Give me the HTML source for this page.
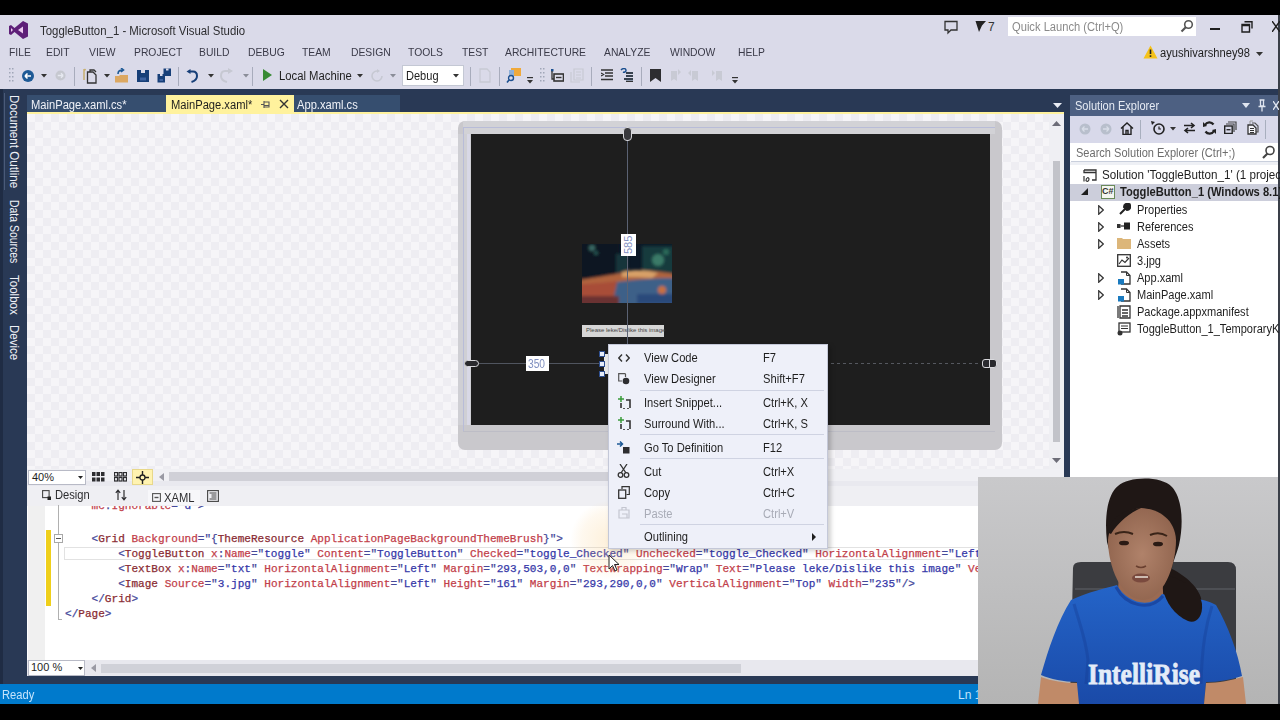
<!DOCTYPE html>
<html><head><meta charset="utf-8">
<style>
*{margin:0;padding:0;box-sizing:border-box}
html,body{width:1280px;height:720px;overflow:hidden;background:#000;font-family:"Liberation Sans",sans-serif;position:relative}
.a{position:absolute}
.t{position:absolute;white-space:nowrap;line-height:1}
.mono{font-family:"Liberation Mono",monospace;-webkit-text-stroke:0.25px currentColor}
</style></head><body>
<!-- frame backgrounds -->
<div class="a" style="left:0;top:15px;width:1278px;height:74px;background:#dadae9"></div>
<div class="a" style="left:0;top:89px;width:1278px;height:595px;background:#293955"></div>
<div class="a" style="left:0;top:684px;width:1278px;height:20px;background:#007acc"></div>
<div class="a" style="left:1278px;top:15px;width:2px;height:689px;background:#3a3f48"></div>

<!-- TITLE -->
<div id="title">
<svg class="a" style="left:8px;top:20px" width="22" height="20" viewBox="0 0 22 20"><path d="M15 6.5 L10 10 L15 13.5 Z M3 8 V12 L5 10 Z" fill="#ecc8f0"/><path d="M15 1 L20 3.5 V16.5 L15 19 L6.5 12 L3 15 L1 14 V6 L3 5 L6.5 8 Z M15 6.5 L10 10 L15 13.5 Z M3 8 V12 L5 10 Z" fill="#5e1f78" fill-rule="evenodd"/></svg>
<div class="t" style="left:40px;top:25px;font-size:12px;color:#2d2d30;transform:scaleX(0.95);transform-origin:0 0">ToggleButton_1 - Microsoft Visual Studio</div>
<!-- right side title -->
<svg class="a" style="left:943px;top:20px" width="16" height="15" viewBox="0 0 16 15"><path d="M2 1.5 H14 V10 H8 L5 13 V10 H2 Z" fill="none" stroke="#333" stroke-width="1.3"/></svg>
<svg class="a" style="left:975px;top:20px" width="12" height="13" viewBox="0 0 12 13"><path d="M0.5 1 H11 L7 5.5 L4 12 Z" fill="#222"/></svg>
<div class="t" style="left:988px;top:21px;font-size:12px;color:#333">7</div>
<div class="a" style="left:1008px;top:17px;width:188px;height:19px;background:#fff"></div>
<div class="t" style="left:1012px;top:21px;font-size:12px;color:#8a8a8a;transform:scaleX(0.93);transform-origin:0 0">Quick Launch (Ctrl+Q)</div>
<svg class="a" style="left:1180px;top:19px" width="14" height="14" viewBox="0 0 14 14"><circle cx="8.5" cy="5.5" r="3.8" fill="none" stroke="#555" stroke-width="1.6"/><path d="M6 8 L1.5 12.5" stroke="#555" stroke-width="2.2"/></svg>
<div class="a" style="left:1210px;top:28px;width:10px;height:2px;background:#1e1e1e"></div>
<svg class="a" style="left:1241px;top:21px" width="12" height="12" viewBox="0 0 12 12"><path d="M3.5 0.8 H11 V7.5 M1 3.5 H8.5 V11 H1 Z M1 4.5 H8.5" fill="none" stroke="#1e1e1e" stroke-width="1.4"/></svg>
<svg class="a" style="left:1272px;top:21px" width="8" height="11" viewBox="0 0 8 11"><path d="M0 0 L8 11 M8 0 L0 11" stroke="#1e1e1e" stroke-width="1.4"/></svg>
</div>
<!-- MENU -->
<div id="menu"><div class="t m" style="left:9px;top:47px;font-size:11px;color:#3a3a48;transform:scaleX(0.94);transform-origin:0 0">FILE</div><div class="t m" style="left:46px;top:47px;font-size:11px;color:#3a3a48;transform:scaleX(0.94);transform-origin:0 0">EDIT</div><div class="t m" style="left:89px;top:47px;font-size:11px;color:#3a3a48;transform:scaleX(0.94);transform-origin:0 0">VIEW</div><div class="t m" style="left:134px;top:47px;font-size:11px;color:#3a3a48;transform:scaleX(0.94);transform-origin:0 0">PROJECT</div><div class="t m" style="left:199px;top:47px;font-size:11px;color:#3a3a48;transform:scaleX(0.94);transform-origin:0 0">BUILD</div><div class="t m" style="left:248px;top:47px;font-size:11px;color:#3a3a48;transform:scaleX(0.94);transform-origin:0 0">DEBUG</div><div class="t m" style="left:302px;top:47px;font-size:11px;color:#3a3a48;transform:scaleX(0.94);transform-origin:0 0">TEAM</div><div class="t m" style="left:351px;top:47px;font-size:11px;color:#3a3a48;transform:scaleX(0.94);transform-origin:0 0">DESIGN</div><div class="t m" style="left:408px;top:47px;font-size:11px;color:#3a3a48;transform:scaleX(0.94);transform-origin:0 0">TOOLS</div><div class="t m" style="left:462px;top:47px;font-size:11px;color:#3a3a48;transform:scaleX(0.94);transform-origin:0 0">TEST</div><div class="t m" style="left:505px;top:47px;font-size:11px;color:#3a3a48;transform:scaleX(0.94);transform-origin:0 0">ARCHITECTURE</div><div class="t m" style="left:604px;top:47px;font-size:11px;color:#3a3a48;transform:scaleX(0.94);transform-origin:0 0">ANALYZE</div><div class="t m" style="left:670px;top:47px;font-size:11px;color:#3a3a48;transform:scaleX(0.94);transform-origin:0 0">WINDOW</div><div class="t m" style="left:738px;top:47px;font-size:11px;color:#3a3a48;transform:scaleX(0.94);transform-origin:0 0">HELP</div><svg class="a" style="left:1143px;top:45px" width="15" height="14" viewBox="0 0 15 14"><path d="M7.5 0.5 L14.5 13.5 H0.5 Z" fill="#f5c21a"/><path d="M7.5 4.5 V9" stroke="#1e1e1e" stroke-width="1.6"/><rect x="6.7" y="10.3" width="1.6" height="1.6" fill="#1e1e1e"/></svg>
<div class="t" style="left:1160px;top:47px;font-size:12px;color:#1e1e1e;transform:scaleX(0.93);transform-origin:0 0">ayushivarshney98</div>
<svg class="a" style="left:1256px;top:52px" width="7" height="4"><path d="M0 0 H7 L3.5 4 Z" fill="#333"/></svg>
</div>
<!-- TOOLBAR -->
<div id="toolbar">
<svg class="a" style="left:8px;top:67px" width="8" height="18"><g fill="#a0a6b8"><rect x="1" y="1" width="1.5" height="1.5"/><rect x="4" y="1" width="1.5" height="1.5"/><rect x="1" y="5" width="1.5" height="1.5"/><rect x="4" y="5" width="1.5" height="1.5"/><rect x="1" y="9" width="1.5" height="1.5"/><rect x="4" y="9" width="1.5" height="1.5"/><rect x="1" y="13" width="1.5" height="1.5"/><rect x="4" y="13" width="1.5" height="1.5"/></g></svg>
<svg class="a" style="left:22px;top:70px" width="12" height="12" viewBox="0 0 12 12"><circle cx="6" cy="6" r="6" fill="#1e5a96"/><path d="M3 6 H9 M3 6 L5.5 3.5 M3 6 L5.5 8.5" stroke="#fff" stroke-width="1.6" fill="none"/></svg>
<svg class="a" style="left:41px;top:74px" width="6" height="4"><path d="M0 0 H6 L3 3.5 Z" fill="#333"/></svg>
<svg class="a" style="left:55px;top:70px" width="11" height="11" viewBox="0 0 12 12"><circle cx="6" cy="6" r="5.5" fill="#c6c8d0"/><path d="M3 6 H9 M9 6 L6.5 3.5 M9 6 L6.5 8.5" stroke="#e6e8f0" stroke-width="1.4" fill="none"/></svg>
<div class="a" style="left:74px;top:67px;width:1px;height:19px;background:#a8acbc"></div>
<svg class="a" style="left:83px;top:68px" width="15" height="16" viewBox="0 0 15 16"><path d="M1 1 V12 M2.5 1 L1 3" stroke="#c8b070" stroke-width="1.5"/><path d="M4.5 4 H10 L13 7 V15 H4.5 Z M7 4 V2 H11 L13 4" fill="none" stroke="#333" stroke-width="1.3"/></svg>
<svg class="a" style="left:104px;top:74px" width="6" height="4"><path d="M0 0 H6 L3 3.5 Z" fill="#333"/></svg>
<svg class="a" style="left:114px;top:68px" width="15" height="15" viewBox="0 0 15 15"><path d="M1 8 H5 L6 7 H14 V14.5 H1 Z" fill="#dca862"/><path d="M4 6 C4 2.5 6 2 9 2 M7 0 L9.5 2 L7 4" stroke="#1e5a96" stroke-width="1.6" fill="none"/></svg>
<svg class="a" style="left:137px;top:70px" width="12" height="12" viewBox="0 0 12 12"><path d="M0 0 H12 V12 H0 Z" fill="#173f78"/><rect x="4" y="0" width="4" height="3" fill="#dadae9"/><rect x="3" y="7.5" width="6" height="3" fill="#3d62a0"/></svg>
<svg class="a" style="left:157px;top:68px" width="15" height="15" viewBox="0 0 15 15"><path d="M6.5 0.5 H14 V8 H6.5 Z" fill="#173f78"/><rect x="9" y="0.5" width="2.5" height="2" fill="#dadae9"/><path d="M0.5 6 H8 V14.5 H0.5 Z" fill="#173f78"/><rect x="3" y="6" width="2.5" height="2" fill="#dadae9"/><rect x="2.5" y="11" width="3.5" height="2" fill="#3d62a0"/></svg>
<div class="a" style="left:178px;top:67px;width:1px;height:19px;background:#a8acbc"></div>
<svg class="a" style="left:186px;top:69px" width="12" height="14" viewBox="0 0 12 14"><path d="M3 2.5 H7 C10 2.5 11 5 11 7 C11 10 9 12 5.5 13" fill="none" stroke="#173f78" stroke-width="2"/><path d="M0.5 2.5 L4.5 0 V5 Z" fill="#173f78"/></svg>
<svg class="a" style="left:208px;top:74px" width="6" height="4"><path d="M0 0 H6 L3 3.5 Z" fill="#333"/></svg>
<svg class="a" style="left:220px;top:68px" width="13" height="15" viewBox="0 0 13 15"><path d="M9 3 H5 C2 3 1 5.5 1 8 C1 11 3 13 7 14" fill="none" stroke="#c6c8d2" stroke-width="2"/><path d="M13 3 L8 0 V6 Z" fill="#c6c8d2"/></svg>
<svg class="a" style="left:243px;top:74px" width="6" height="4"><path d="M0 0 H6 L3 3.5 Z" fill="#8a8d98"/></svg>
<div class="a" style="left:252px;top:67px;width:1px;height:19px;background:#a8acbc"></div>
<svg class="a" style="left:263px;top:69px" width="9" height="12"><path d="M0 0 L9 6 L0 12 Z" fill="#388a34"/></svg>
<div class="t" style="left:279px;top:70px;font-size:12px;color:#1e1e1e;transform:scaleX(0.94);transform-origin:0 0">Local Machine</div>
<svg class="a" style="left:357px;top:74px" width="6" height="4"><path d="M0 0 H6 L3 3.5 Z" fill="#333"/></svg>
<svg class="a" style="left:371px;top:69px" width="12" height="13" viewBox="0 0 12 13"><path d="M6 2 A5 5 0 1 0 11 7" fill="none" stroke="#c6c8d2" stroke-width="1.6"/><path d="M6 0 V4 L9 2 Z" fill="#c6c8d2"/></svg>
<svg class="a" style="left:390px;top:74px" width="6" height="4"><path d="M0 0 H6 L3 3.5 Z" fill="#8a8d98"/></svg>
<div class="a" style="left:402px;top:65px;width:62px;height:21px;background:#fff;border:1px solid #c4c8d4"></div>
<div class="t" style="left:406px;top:70px;font-size:12px;color:#1e1e1e;transform:scaleX(0.92);transform-origin:0 0">Debug</div>
<svg class="a" style="left:453px;top:74px" width="6" height="4"><path d="M0 0 H6 L3 3.5 Z" fill="#333"/></svg>
<div class="a" style="left:470px;top:67px;width:1px;height:19px;background:#a8acbc"></div>
<svg class="a" style="left:479px;top:68px" width="12" height="15"><path d="M1 1 H8 L11 4 V14 H1 Z" fill="none" stroke="#c8cad4" stroke-width="1.3"/></svg>
<div class="a" style="left:499px;top:67px;width:1px;height:19px;background:#a8acbc"></div>
<svg class="a" style="left:506px;top:67px" width="16" height="16" viewBox="0 0 16 16"><rect x="5" y="1" width="10" height="8" fill="#f0a93a"/><rect x="3" y="3" width="5" height="6" fill="#8fb0d8"/><circle cx="5" cy="11" r="2.5" fill="none" stroke="#1b4f8f" stroke-width="1.4"/><path d="M3 13 L1 15.5" stroke="#1b4f8f" stroke-width="1.6"/></svg>
<svg class="a" style="left:527px;top:77px" width="6" height="7"><rect x="0" y="0" width="6" height="1.2" fill="#333"/><path d="M0 3 H6 L3 6.5 Z" fill="#333"/></svg>
<svg class="a" style="left:539px;top:67px" width="8" height="18"><g fill="#a0a6b8"><rect x="1" y="1" width="1.5" height="1.5"/><rect x="4" y="1" width="1.5" height="1.5"/><rect x="1" y="5" width="1.5" height="1.5"/><rect x="4" y="5" width="1.5" height="1.5"/><rect x="1" y="9" width="1.5" height="1.5"/><rect x="4" y="9" width="1.5" height="1.5"/><rect x="1" y="13" width="1.5" height="1.5"/><rect x="4" y="13" width="1.5" height="1.5"/></g></svg>
<svg class="a" style="left:550px;top:69px" width="14" height="13" viewBox="0 0 14 13"><rect x="1" y="0" width="2.5" height="2.5" fill="#1b4f8f"/><path d="M2 2 V10 H4" stroke="#333" stroke-width="1.3" fill="none"/><rect x="4" y="5" width="9.5" height="7" fill="none" stroke="#333" stroke-width="1.6"/><path d="M6 8.5 H11.5" stroke="#333" stroke-width="1.4"/></svg>
<svg class="a" style="left:570px;top:68px" width="14" height="15" viewBox="0 0 14 15"><path d="M1 4 V14 H10 M4 1 H13 V12 H4 Z M6 4 H11 M6 7 H11 M6 10 H11" fill="none" stroke="#c8cad4" stroke-width="1.2"/></svg>
<div class="a" style="left:591px;top:67px;width:1px;height:19px;background:#a8acbc"></div>
<svg class="a" style="left:601px;top:69px" width="12" height="12" viewBox="0 0 12 12"><path d="M0 1 H12 M4 4 H12 M4 7 H12 M0 10.5 H12 M0 4 L2.5 5.5 L0 7" stroke="#333" stroke-width="1.3" fill="none"/></svg>
<svg class="a" style="left:620px;top:68px" width="13" height="14" viewBox="0 0 13 14"><path d="M1 2 C3 0 6 0 6 2.5 C6 4 4 4.5 3 4 M6 5 H13 M6 8 H13 M4 11 H13 M6 13.5 H13" stroke="#1b4f8f" stroke-width="1.5" fill="none"/><path d="M6 5 H13 M6 8 H13 M4 11 H13 M6 13.5 H13" stroke="#333" stroke-width="1.3"/></svg>
<div class="a" style="left:641px;top:67px;width:1px;height:19px;background:#a8acbc"></div>
<svg class="a" style="left:650px;top:69px" width="11" height="13"><path d="M0 0 H11 V13 L5.5 9 L0 13 Z" fill="#2d2d30"/></svg>
<svg class="a" style="left:671px;top:69px" width="10" height="13"><path d="M0 2 H6 V12 L3 10 L0 12 Z M7 0 L10 3 L7 6" fill="#c8cad4"/></svg>
<svg class="a" style="left:688px;top:69px" width="11" height="13"><path d="M4 2 H10 V12 L7 10 L4 12 Z M3 1 L0 4 L3 7" fill="#c8cad4"/></svg>
<svg class="a" style="left:712px;top:69px" width="11" height="13"><path d="M4 2 H10 V12 L7 10 L4 12 Z M0 1 L3 4 L0 7" fill="#c8cad4"/></svg>
<svg class="a" style="left:732px;top:77px" width="6" height="7"><rect x="0" y="0" width="6" height="1.2" fill="#333"/><path d="M0 3 H6 L3 6.5 Z" fill="#333"/></svg>
</div>
<!-- TABS -->
<div id="tabs">
<div class="a" style="left:27px;top:95px;width:139px;height:18px;background:#364e6f"></div>
<div class="t" style="left:31px;top:99px;font-size:12px;color:#f0f2f8;transform:scaleX(0.93);transform-origin:0 0">MainPage.xaml.cs*</div>
<div class="a" style="left:166px;top:95px;width:128px;height:18px;background:#fff29d"></div>
<div class="t" style="left:171px;top:99px;font-size:12px;color:#1e1e1e;transform:scaleX(0.93);transform-origin:0 0">MainPage.xaml*</div>
<svg class="a" style="left:261px;top:100px" width="10" height="9" viewBox="0 0 10 9"><path d="M0 4.5 H3 M3 1 V8 M3 2 H8 V7 H3 M3 5.5 H8" stroke="#555" stroke-width="1.1" fill="none"/></svg>
<svg class="a" style="left:279px;top:99px" width="10" height="10" viewBox="0 0 10 10"><path d="M1 1 L9 9 M9 1 L1 9" stroke="#333" stroke-width="1.4"/></svg>
<div class="a" style="left:294px;top:95px;width:106px;height:18px;background:#364e6f"></div>
<div class="t" style="left:297px;top:99px;font-size:12px;color:#f0f2f8;transform:scaleX(0.93);transform-origin:0 0">App.xaml.cs</div>
<svg class="a" style="left:1053px;top:103px" width="9" height="5"><path d="M0 0 H9 L4.5 5 Z" fill="#e8ecf4"/></svg>
<div class="a" style="left:27px;top:112px;width:1037px;height:2px;background:#fff29d"></div>
</div>
<!-- LEFT STRIP -->
<div id="left">
<div class="a" style="left:0;top:89px;width:3px;height:595px;background:#1f2c44"></div>
<div class="a" style="left:4px;top:93px;width:1px;height:97px;background:#4a5a78"></div>
<div class="t" style="left:20px;top:95px;font-size:12px;color:#eef0f6;transform:rotate(90deg) scaleX(0.97);transform-origin:0 0">Document Outline</div>
<div class="t" style="left:20px;top:200px;font-size:12px;color:#eef0f6;transform:rotate(90deg) scaleX(0.87);transform-origin:0 0">Data Sources</div>
<div class="t" style="left:20px;top:275px;font-size:12px;color:#eef0f6;transform:rotate(90deg) scaleX(0.96);transform-origin:0 0">Toolbox</div>
<div class="t" style="left:20px;top:325px;font-size:12px;color:#eef0f6;transform:rotate(90deg) scaleX(0.96);transform-origin:0 0">Device</div>
</div>
<!-- DESIGNER -->
<div id="designer">
<div class="a" style="left:27px;top:114px;width:1037px;height:355px;background-color:#f6f5f8;background-image:linear-gradient(45deg,#eeedf2 25%,transparent 25%,transparent 75%,#eeedf2 75%),linear-gradient(45deg,#eeedf2 25%,transparent 25%,transparent 75%,#eeedf2 75%);background-size:16px 16px;background-position:0 0,8px 8px"></div>
<!-- v scrollbar -->
<div class="a" style="left:1049px;top:114px;width:15px;height:355px;background:#efeff3"></div>
<div class="a" style="left:1053px;top:161px;width:7px;height:281px;background:#c2c3c9"></div>
<svg class="a" style="left:1052px;top:121px" width="9" height="5"><path d="M0 5 H9 L4.5 0 Z" fill="#6d6d78"/></svg>
<svg class="a" style="left:1052px;top:458px" width="9" height="5"><path d="M0 0 H9 L4.5 5 Z" fill="#6d6d78"/></svg>
<!-- device frame -->
<div class="a" style="left:458px;top:121px;width:544px;height:329px;background:#c9c8cc;border-radius:7px"></div>
<div class="a" style="left:463px;top:121px;width:532px;height:13px;background:#d2d2d6"></div>
<div class="a" style="left:463px;top:127px;width:532px;height:1px;background:#b8bcd8"></div>
<div class="a" style="left:458px;top:134px;width:13px;height:291px;background:#cfcfd4"></div>
<div class="a" style="left:463px;top:127px;width:1px;height:304px;background:#b8bcd8"></div>
<div class="a" style="left:467px;top:134px;width:3px;height:291px;background:#d8d8e6"></div>
<div class="a" style="left:463px;top:431px;width:532px;height:1px;background:#bdbdc6"></div>
<div class="a" style="left:471px;top:134px;width:519px;height:291px;background:#1e1e1e"></div>
<!-- image -->
<svg class="a" style="left:582px;top:244px" width="90" height="59" viewBox="0 0 90 59">
<defs><filter id="bl" x="-10%" y="-10%" width="120%" height="120%"><feGaussianBlur stdDeviation="1.6"/></filter><clipPath id="cp"><rect width="90" height="59"/></clipPath></defs>
<rect width="90" height="59" fill="#0c1826"/>
<g clip-path="url(#cp)" filter="url(#bl)">
<rect x="-3" y="-3" width="40" height="38" fill="#0a1424"/>
<rect x="34" y="10" width="12" height="24" fill="#15343a"/>
<rect x="60" y="2" width="32" height="32" fill="#143a3c"/>
<circle cx="76" cy="16" r="6" fill="#3a7a68"/>
<circle cx="84" cy="8" r="3" fill="#2a6a5a"/>
<circle cx="10" cy="4" r="3" fill="#3a6a66"/>
<circle cx="14" cy="9" r="2" fill="#2a5a56"/>
<path d="M-3 36 C15 33 35 30 50 27 C65 26 80 28 93 30 V44 H-3 Z" fill="#b0643e"/>
<path d="M40 28 C52 25 66 26 76 29 L70 34 C60 33 48 33 40 33 Z" fill="#d8a068"/>
<path d="M-3 40 C10 40 25 38 35 37 L38 62 H-3 Z" fill="#a84e38"/>
<path d="M35 38 C50 36 70 34 93 34 V62 H30 Z" fill="#3e6088"/>
<circle cx="80" cy="46" r="4" fill="#c87040"/>
<rect x="-3" y="52" width="40" height="10" fill="#6a3030"/>
<rect x="55" y="50" width="38" height="10" fill="#2a4a7a"/>
</g>
</svg>
<!-- textbox -->
<div class="a" style="left:582px;top:325px;width:82px;height:12px;background:#d6d6d6"></div>
<div class="t" style="left:586px;top:327px;font-size:6px;color:#444">Please leke/Dislike this image</div>
<!-- top margin adorner -->
<div class="a" style="left:627px;top:134px;width:1.4px;height:228px;background:#5b6273"></div>
<div class="a" style="left:623px;top:127px;width:9px;height:14px;background:#3a3a3e;border:1.5px solid #d8d8dc;border-radius:4px"></div>
<div class="a" style="left:621px;top:234px;width:15px;height:22px;background:#fff"></div>
<div class="t" style="left:623px;top:254px;font-size:11px;color:#7f8fc2;transform:rotate(-90deg);transform-origin:0 0">585</div>
<!-- left margin adorner -->
<div class="a" style="left:471px;top:363px;width:130px;height:1.4px;background:#50555f"></div>
<div class="a" style="left:464px;top:360px;width:15px;height:7px;background:#2a2a2e;border:1.5px solid #d8d8dc;border-radius:4px"></div>
<div class="a" style="left:526px;top:356px;width:23px;height:15px;background:#fff"></div>
<div class="t" style="left:528px;top:358px;font-size:12px;color:#8090c0;transform:scaleX(0.85);transform-origin:0 0">350</div>
<!-- selection handles -->
<div class="a" style="left:604px;top:354px;width:4px;height:20px;background:#e8e8e8"></div>
<div class="a" style="left:600px;top:352px;width:4px;height:4px;background:#e6ecf8;outline:1px solid #2f4f8f"></div>
<div class="a" style="left:600px;top:362px;width:4px;height:4px;background:#e6ecf8;outline:1px solid #2f4f8f"></div>
<div class="a" style="left:600px;top:372px;width:4px;height:4px;background:#e6ecf8;outline:1px solid #2f4f8f"></div>
<!-- right dotted adorner -->
<div class="a" style="left:831px;top:363px;width:150px;height:1.4px;background-image:linear-gradient(90deg,#55585f 50%,transparent 50%);background-size:6px 2px"></div>
<div class="a" style="left:982px;top:359px;width:8px;height:9px;background:#2a2a2e;border:1.5px solid #d8d8dc;border-radius:3px 0 0 3px"></div>
<div class="a" style="left:989px;top:359px;width:8px;height:9px;background:#2a2a2e;border:1.5px solid #d8d8dc;border-radius:0 3px 3px 0"></div>
</div>
<!-- CODE -->
<div id="code">
<!-- zoom bar -->
<div class="a" style="left:27px;top:469px;width:1037px;height:12px;background:#f0f0f4"></div><div class="a" style="left:27px;top:481px;width:1037px;height:5px;background:#e9e9ef"></div>
<div class="a" style="left:28px;top:470px;width:58px;height:15px;background:#fff;border:1px solid #b8bac6"></div>
<div class="t" style="left:32px;top:472px;font-size:11px;color:#1e1e1e">40%</div>
<svg class="a" style="left:78px;top:476px" width="5" height="3"><path d="M0 0 H5 L2.5 3 Z" fill="#222"/></svg>
<svg class="a" style="left:92px;top:472px" width="13" height="10"><g fill="#2d2d30"><rect x="0" y="0" width="3.5" height="4"/><rect x="4.5" y="0" width="3.5" height="4"/><rect x="9" y="0" width="3.5" height="4"/><rect x="0" y="5.5" width="3.5" height="4"/><rect x="4.5" y="5.5" width="3.5" height="4"/><rect x="9" y="5.5" width="3.5" height="4"/></g></svg>
<svg class="a" style="left:114px;top:472px" width="13" height="10"><g fill="none" stroke="#2d2d30" stroke-width="1.2"><rect x="0.5" y="0.5" width="3" height="3.5"/><rect x="5" y="0.5" width="3" height="3.5"/><rect x="9.5" y="0.5" width="3" height="3.5"/><rect x="0.5" y="5.5" width="3" height="3.5"/><rect x="5" y="5.5" width="3" height="3.5"/><rect x="9.5" y="5.5" width="3" height="3.5"/></g></svg>
<div class="a" style="left:132px;top:469px;width:21px;height:16px;background:#fff3b0;border:1px solid #e8d88a"></div>
<svg class="a" style="left:136px;top:471px" width="13" height="13" viewBox="0 0 13 13"><circle cx="6.5" cy="6.5" r="2.5" fill="none" stroke="#222" stroke-width="1.3"/><path d="M6.5 0 V4 M6.5 9 V13 M0 6.5 H4 M9 6.5 H13" stroke="#222" stroke-width="1.4"/></svg>
<svg class="a" style="left:159px;top:473px" width="5" height="8"><path d="M5 0 V8 L0 4 Z" fill="#9a9aa4"/></svg>
<div class="a" style="left:169px;top:472px;width:550px;height:9px;background:#d0d0d7"></div>
<!-- design/xaml tab row -->
<div class="a" style="left:27px;top:486px;width:1037px;height:20px;background:#efeff3"></div>
<svg class="a" style="left:42px;top:490px" width="9" height="10" viewBox="0 0 9 10"><rect x="0.6" y="0.6" width="6.5" height="7" fill="none" stroke="#444" stroke-width="1.1"/><rect x="5.5" y="6.5" width="3.5" height="3.5" fill="#222"/></svg>
<div class="t" style="left:55px;top:489px;font-size:12px;color:#2d2d30;transform:scaleX(0.93);transform-origin:0 0">Design</div>
<svg class="a" style="left:115px;top:489px" width="12" height="12" viewBox="0 0 12 12"><path d="M3 11 V1.5 M0.8 3.8 L3 1.2 L5.2 3.8 M9 1 V10.5 M6.8 8.2 L9 10.8 L11.2 8.2" fill="none" stroke="#2d2d30" stroke-width="1.2"/></svg>
<div class="a" style="left:148px;top:490px;width:52px;height:15px;background:#f7f7fa"></div>
<svg class="a" style="left:152px;top:493px" width="9" height="9" viewBox="0 0 9 9"><rect x="0.6" y="0.6" width="7.8" height="7.8" fill="none" stroke="#555" stroke-width="1.1"/><rect x="2.5" y="3.8" width="4" height="1.4" fill="#555"/></svg>
<div class="t" style="left:164px;top:492px;font-size:12px;color:#2d2d30;transform:scaleX(0.93);transform-origin:0 0">XAML</div>
<svg class="a" style="left:207px;top:490px" width="12" height="12" viewBox="0 0 12 12"><rect x="0.6" y="0.6" width="10.8" height="10.8" fill="none" stroke="#444" stroke-width="1.1"/><path d="M2.5 3 H9.5 M4.5 5 H9.5 M4.5 7 H9.5 M2.5 9 H9.5" stroke="#444" stroke-width="1"/></svg>
<!-- code editor -->
<div class="a" style="left:27px;top:506px;width:1037px;height:154px;background:#fff"></div>
<div class="a" style="left:28px;top:506px;width:17px;height:154px;background:#f0f0f0"></div>
<div class="a" style="left:64px;top:547px;width:1000px;height:13px;border:1px solid #e2e2e2;border-right:none"></div>
<div class="a" style="left:46px;top:530px;width:5px;height:76px;background:#efcf1a"></div>
<div class="a" style="left:58px;top:505px;width:1px;height:114px;background:#b0b0b0"></div>
<div class="a" style="left:58px;top:619px;width:4px;height:1px;background:#b0b0b0"></div>
<div class="a" style="left:54px;top:534px;width:9px;height:9px;background:#fff;border:1px solid #a8a8a8"></div><div class="a" style="left:56px;top:538px;width:5px;height:1px;background:#555"></div>
<div class="a" style="left:27px;top:506px;width:1037px;height:154px;overflow:hidden"><div class="t mono" style="left:64.58px;top:-6px;font-size:11.075px;line-height:13px"><span style="color:#c2404a">mc</span><span style="color:#44489a">:</span><span style="color:#c2404a">Ignorable</span><span style="color:#44489a">=</span><span style="color:#44489a">"</span><span style="color:#3638a8">d</span><span style="color:#44489a">"</span><span style="color:#44489a">&gt;</span></div><div class="t mono" style="left:64.58px;top:26.5px;font-size:11.075px;line-height:13px"><span style="color:#44489a">&lt;</span><span style="color:#8a2c34">Grid</span><span style="color:#44489a"> </span><span style="color:#c2404a">Background</span><span style="color:#44489a">=</span><span style="color:#44489a">"{</span><span style="color:#8a2c34">ThemeResource</span><span style="color:#44489a"> </span><span style="color:#c2404a">ApplicationPageBackgroundThemeBrush</span><span style="color:#44489a">}"</span><span style="color:#44489a">&gt;</span></div><div class="t mono" style="left:91.16px;top:41.5px;font-size:11.075px;line-height:13px"><span style="color:#44489a">&lt;</span><span style="color:#8a2c34">ToggleButton</span><span style="color:#44489a"> </span><span style="color:#c2404a">x</span><span style="color:#44489a">:</span><span style="color:#c2404a">Name</span><span style="color:#44489a">="</span><span style="color:#3638a8">toggle</span><span style="color:#44489a">"</span><span style="color:#c2404a"> Content</span><span style="color:#44489a">="</span><span style="color:#3638a8">ToggleButton</span><span style="color:#44489a">"</span><span style="color:#c2404a"> Checked</span><span style="color:#44489a">="</span><span style="color:#3638a8">toggle_Checked</span><span style="color:#44489a">"</span><span style="color:#c2404a"> Unchecked</span><span style="color:#44489a">="</span><span style="color:#3638a8">toggle_Checked</span><span style="color:#44489a">"</span><span style="color:#c2404a"> HorizontalAlignment</span><span style="color:#44489a">="</span><span style="color:#3638a8">Left</span><span style="color:#44489a">"</span><span style="color:#c2404a"> VerticalAlignment</span><span style="color:#44489a">="</span><span style="color:#3638a8">Top</span><span style="color:#44489a">"</span></div><div class="t mono" style="left:91.16px;top:56.5px;font-size:11.075px;line-height:13px"><span style="color:#44489a">&lt;</span><span style="color:#8a2c34">TextBox</span><span style="color:#44489a"> </span><span style="color:#c2404a">x</span><span style="color:#44489a">:</span><span style="color:#c2404a">Name</span><span style="color:#44489a">="</span><span style="color:#3638a8">txt</span><span style="color:#44489a">"</span><span style="color:#c2404a"> HorizontalAlignment</span><span style="color:#44489a">="</span><span style="color:#3638a8">Left</span><span style="color:#44489a">"</span><span style="color:#c2404a"> Margin</span><span style="color:#44489a">="</span><span style="color:#3638a8">293,503,0,0</span><span style="color:#44489a">"</span><span style="color:#c2404a"> TextWrapping</span><span style="color:#44489a">="</span><span style="color:#3638a8">Wrap</span><span style="color:#44489a">"</span><span style="color:#c2404a"> Text</span><span style="color:#44489a">="</span><span style="color:#3638a8">Please leke/Dislike this image</span><span style="color:#44489a">"</span><span style="color:#c2404a"> VerticalAlignment</span><span style="color:#44489a">="</span><span style="color:#3638a8">Top</span><span style="color:#44489a">"</span></div><div class="t mono" style="left:91.16px;top:71.5px;font-size:11.075px;line-height:13px"><span style="color:#44489a">&lt;</span><span style="color:#8a2c34">Image</span><span style="color:#44489a"> </span><span style="color:#c2404a">Source</span><span style="color:#44489a">="</span><span style="color:#3638a8">3.jpg</span><span style="color:#44489a">"</span><span style="color:#c2404a"> HorizontalAlignment</span><span style="color:#44489a">="</span><span style="color:#3638a8">Left</span><span style="color:#44489a">"</span><span style="color:#c2404a"> Height</span><span style="color:#44489a">="</span><span style="color:#3638a8">161</span><span style="color:#44489a">"</span><span style="color:#c2404a"> Margin</span><span style="color:#44489a">="</span><span style="color:#3638a8">293,290,0,0</span><span style="color:#44489a">"</span><span style="color:#c2404a"> VerticalAlignment</span><span style="color:#44489a">="</span><span style="color:#3638a8">Top</span><span style="color:#44489a">"</span><span style="color:#c2404a"> Width</span><span style="color:#44489a">="</span><span style="color:#3638a8">235</span><span style="color:#44489a">"</span><span style="color:#44489a">/&gt;</span></div><div class="t mono" style="left:64.58px;top:86.5px;font-size:11.075px;line-height:13px"><span style="color:#44489a">&lt;/</span><span style="color:#8a2c34">Grid</span><span style="color:#44489a">&gt;</span></div><div class="t mono" style="left:38.00px;top:101.5px;font-size:11.075px;line-height:13px"><span style="color:#44489a">&lt;/</span><span style="color:#8a2c34">Page</span><span style="color:#44489a">&gt;</span></div></div>
<!-- bottom zoom -->
<div class="a" style="left:27px;top:660px;width:1037px;height:16px;background:#e8e8ee"></div>
<div class="a" style="left:28px;top:660px;width:57px;height:16px;background:#fff;border:1px solid #b8bac6"></div>
<div class="t" style="left:31px;top:662px;font-size:11px;color:#1e1e1e">100 %</div>
<svg class="a" style="left:78px;top:667px" width="5" height="3"><path d="M0 0 H5 L2.5 3 Z" fill="#222"/></svg>
<svg class="a" style="left:91px;top:664px" width="5" height="8"><path d="M5 0 V8 L0 4 Z" fill="#9a9aa4"/></svg>
<div class="a" style="left:101px;top:664px;width:640px;height:9px;background:#d0d1d8"></div>
</div>
<!-- SOLUTION EXPLORER -->
<div id="se">
<div class="a" style="left:1070px;top:95px;width:208px;height:382px;background:#fff"></div>
<div class="a" style="left:1070px;top:95px;width:208px;height:21px;background:#4d6082"></div>
<div class="t" style="left:1075px;top:100px;font-size:12px;color:#e6ebf4;transform:scaleX(0.92);transform-origin:0 0">Solution Explorer</div>
<svg class="a" style="left:1242px;top:103px" width="8" height="5"><path d="M0 0 H8 L4 5 Z" fill="#dfe5ef"/></svg>
<svg class="a" style="left:1258px;top:99px" width="8" height="13" viewBox="0 0 8 13"><path d="M1.5 1 H6.5 M2.5 1 V7 H5.5 V1 M0.5 7.5 H7.5 M4 7.5 V12.5" stroke="#dfe5ef" stroke-width="1.3" fill="none"/></svg>
<svg class="a" style="left:1273px;top:101px" width="6" height="9"><path d="M0 0 L6 9 M6 0 L0 9" stroke="#dfe5ef" stroke-width="1.3"/></svg>
<div class="a" style="left:1070px;top:116px;width:208px;height:27px;background:#d8d9ea"></div>
<svg class="a" style="left:1079px;top:123px" width="12" height="12"><circle cx="6" cy="6" r="5.5" fill="#b8bfcc"/><path d="M3 6 H9 M3 6 L5.5 3.5 M3 6 L5.5 8.5" stroke="#d8dde8" stroke-width="1.3" fill="none"/></svg>
<svg class="a" style="left:1100px;top:123px" width="12" height="12"><circle cx="6" cy="6" r="5.5" fill="#b8bfcc"/><path d="M3 6 H9 M9 6 L6.5 3.5 M9 6 L6.5 8.5" stroke="#d8dde8" stroke-width="1.3" fill="none"/></svg>
<svg class="a" style="left:1120px;top:122px" width="14" height="13" viewBox="0 0 14 13"><path d="M1 6.5 L7 1 L13 6.5 M3 5 V12.5 H11 V5 M6 12.5 V8.5 H8 V12.5" fill="none" stroke="#222" stroke-width="1.4"/></svg>
<div class="a" style="left:1140px;top:120px;width:1px;height:19px;background:#a8afbe"></div>
<svg class="a" style="left:1151px;top:121px" width="14" height="14" viewBox="0 0 14 14"><circle cx="8" cy="8" r="5" fill="none" stroke="#222" stroke-width="1.6"/><path d="M8 5.5 V8 H10" stroke="#222" stroke-width="1.2" fill="none"/><path d="M0 0 L4 1 L1 4 Z" fill="#222"/></svg>
<svg class="a" style="left:1170px;top:127px" width="6" height="4"><path d="M0 0 H6 L3 3.5 Z" fill="#333"/></svg>
<svg class="a" style="left:1183px;top:122px" width="13" height="12" viewBox="0 0 13 12"><path d="M1 3.5 H11 M8 1 L11 3.5 L8 6 M12 8.5 H2 M5 6 L2 8.5 L5 11" fill="none" stroke="#222" stroke-width="1.6"/></svg>
<svg class="a" style="left:1203px;top:121px" width="13" height="14" viewBox="0 0 13 14"><path d="M10.5 3.5 A5 5 0 0 0 2 4 M2.5 10.5 A5 5 0 0 0 11 10" fill="none" stroke="#222" stroke-width="2.2"/><path d="M0 1 L4 5 L0 6 Z M13 13 L9 9 L13 8 Z" fill="#222"/></svg>
<svg class="a" style="left:1224px;top:121px" width="13" height="13" viewBox="0 0 13 13"><path d="M4 1 H12 V9 M2 3 H10 V11" fill="none" stroke="#444" stroke-width="1.2"/><rect x="0.7" y="5" width="7.5" height="7.5" fill="none" stroke="#222" stroke-width="1.4"/><path d="M2.5 8.7 H6.5" stroke="#222" stroke-width="1.3"/></svg>
<svg class="a" style="left:1245px;top:120px" width="14" height="15" viewBox="0 0 14 15"><path d="M5 1 V4 M5 1 H8" stroke="#999" stroke-width="1"/><path d="M7 3 H10 L13 6 V12 H11" fill="none" stroke="#555" stroke-width="1.2"/><path d="M3 5 H8 L11 8 V14 H3 Z" fill="#f4f4f8" stroke="#333" stroke-width="1.3"/><path d="M5 8.5 H9 M5 10.5 H9 M5 12.5 H9" stroke="#333" stroke-width="1.1"/></svg>
<div class="a" style="left:1265px;top:120px;width:1px;height:19px;background:#a8afbe"></div>
<div class="a" style="left:1071px;top:143px;width:207px;height:19px;background:#fff;border-bottom:1px solid #c9cfdc"></div>
<div class="t" style="left:1076px;top:147px;font-size:12px;color:#6d6d6d;transform:scaleX(0.92);transform-origin:0 0">Search Solution Explorer (Ctrl+;)</div>
<svg class="a" style="left:1262px;top:145px" width="13" height="14" viewBox="0 0 13 14"><circle cx="8" cy="5.5" r="4" fill="none" stroke="#444" stroke-width="1.6"/><path d="M5.5 8.5 L1 13" stroke="#444" stroke-width="2.2"/></svg>
<div class="a" style="left:1070px;top:162px;width:208px;height:3px;background:#eef0f5"></div>
<!-- tree -->
<svg class="a" style="left:1083px;top:168px" width="14" height="15" viewBox="0 0 14 15"><path d="M1 2 H13 V12 H9 M1 2 V4.5 H13" fill="none" stroke="#333" stroke-width="1.3"/><path d="M1 13.5 V8 M3 13 C3 9 6 9 6 11 C6 14 3 14 3 12" stroke="#333" stroke-width="1.2" fill="none"/></svg>
<div class="t" style="left:1102px;top:169px;font-size:12px;color:#1e1e1e;transform:scaleX(0.97);transform-origin:0 0">Solution 'ToggleButton_1' (1 project)</div>
<div class="a" style="left:1070px;top:184px;width:208px;height:17px;background:#cccedb"></div>
<svg class="a" style="left:1081px;top:188px" width="7" height="7"><path d="M7 0 V7 H0 Z" fill="#1e1e1e"/></svg>
<div class="a" style="left:1101px;top:185px;width:14px;height:14px;border:1px solid #6a8a5a;background:#f4f6f0"></div>
<div class="t" style="left:1102px;top:187px;font-size:9px;color:#333;font-weight:bold">C#</div>
<div class="t" style="left:1120px;top:186px;font-size:12px;color:#1e1e1e;font-weight:bold;transform:scaleX(0.93);transform-origin:0 0">ToggleButton_1 (Windows 8.1)</div>
<svg class="a" style="left:1098px;top:205px" width="6" height="10"><path d="M0.7 0.7 L5.3 5 L0.7 9.3 Z" fill="none" stroke="#333" stroke-width="1.2"/></svg><svg class="a" style="left:1119px;top:203px" width="12" height="12" viewBox="0 0 12 12"><path d="M1 11 L6 6 M5 4 C5 1.5 7.5 0 10 1 L8 3 L9 4 L11 2 C12 4.5 10.5 7 8 7 Z" stroke="#222" stroke-width="2" fill="#222"/></svg><div class="t" style="left:1137px;top:204px;font-size:12px;color:#1e1e1e;transform:scaleX(0.92);transform-origin:0 0">Properties</div>
<svg class="a" style="left:1098px;top:222px" width="6" height="10"><path d="M0.7 0.7 L5.3 5 L0.7 9.3 Z" fill="none" stroke="#333" stroke-width="1.2"/></svg><svg class="a" style="left:1117px;top:220px" width="14" height="12" viewBox="0 0 14 12"><rect x="0" y="4" width="3.5" height="4" fill="#333"/><path d="M3.5 6 H7" stroke="#333" stroke-width="1.3"/><rect x="7" y="2.5" width="6" height="7" fill="#222"/></svg><div class="t" style="left:1137px;top:221px;font-size:12px;color:#1e1e1e;transform:scaleX(0.92);transform-origin:0 0">References</div>
<svg class="a" style="left:1098px;top:239px" width="6" height="10"><path d="M0.7 0.7 L5.3 5 L0.7 9.3 Z" fill="none" stroke="#333" stroke-width="1.2"/></svg><svg class="a" style="left:1117px;top:237px" width="14" height="12" viewBox="0 0 14 12"><path d="M0 1 H5 L6 2 H14 V12 H0 Z" fill="#dcb67a"/></svg><div class="t" style="left:1137px;top:238px;font-size:12px;color:#1e1e1e;transform:scaleX(0.92);transform-origin:0 0">Assets</div>
<svg class="a" style="left:1117px;top:254px" width="14" height="13" viewBox="0 0 14 13"><rect x="0.7" y="0.7" width="12.6" height="11.6" fill="none" stroke="#333" stroke-width="1.3"/><path d="M2 10 L5 6 L8 8.5 L12 4" stroke="#333" stroke-width="1.2" fill="none"/><circle cx="10" cy="3.5" r="1" fill="#333"/></svg><div class="t" style="left:1137px;top:255px;font-size:12px;color:#1e1e1e;transform:scaleX(0.92);transform-origin:0 0">3.jpg</div>
<svg class="a" style="left:1098px;top:273px" width="6" height="10"><path d="M0.7 0.7 L5.3 5 L0.7 9.3 Z" fill="none" stroke="#333" stroke-width="1.2"/></svg><svg class="a" style="left:1118px;top:271px" width="13" height="14" viewBox="0 0 13 14"><path d="M3 1 H8.5 L12 4.5 V13 H3" fill="none" stroke="#333" stroke-width="1.3"/><path d="M8.5 1 V4.5 H12" fill="none" stroke="#333" stroke-width="1"/><rect x="0" y="8" width="6" height="5.5" fill="#1a7abf"/></svg><div class="t" style="left:1137px;top:272px;font-size:12px;color:#1e1e1e;transform:scaleX(0.92);transform-origin:0 0">App.xaml</div>
<svg class="a" style="left:1098px;top:290px" width="6" height="10"><path d="M0.7 0.7 L5.3 5 L0.7 9.3 Z" fill="none" stroke="#333" stroke-width="1.2"/></svg><svg class="a" style="left:1118px;top:288px" width="13" height="14" viewBox="0 0 13 14"><path d="M3 1 H8.5 L12 4.5 V13 H3" fill="none" stroke="#333" stroke-width="1.3"/><path d="M8.5 1 V4.5 H12" fill="none" stroke="#333" stroke-width="1"/><rect x="0" y="8" width="6" height="5.5" fill="#1a7abf"/></svg><div class="t" style="left:1137px;top:289px;font-size:12px;color:#1e1e1e;transform:scaleX(0.92);transform-origin:0 0">MainPage.xaml</div>
<svg class="a" style="left:1117px;top:305px" width="14" height="14" viewBox="0 0 14 14"><path d="M1 1 V13 M3 1 H13 V13 H3 Z M5 5 H11 M5 8 H11 M5 11 H11" fill="none" stroke="#333" stroke-width="1.3"/></svg><div class="t" style="left:1137px;top:306px;font-size:12px;color:#1e1e1e;transform:scaleX(0.92);transform-origin:0 0">Package.appxmanifest</div>
<svg class="a" style="left:1117px;top:322px" width="14" height="14" viewBox="0 0 14 14"><rect x="2" y="1" width="11" height="9" fill="none" stroke="#333" stroke-width="1.3"/><path d="M4 4 H11 M4 6.5 H11" stroke="#333" stroke-width="1.2"/><circle cx="3" cy="11" r="2.5" fill="#333"/></svg><div class="t" style="left:1137px;top:323px;font-size:12px;color:#1e1e1e;transform:scaleX(0.92);transform-origin:0 0">ToggleButton_1_TemporaryKey.pfx</div>
</div>
<!-- STATUS -->
<div id="status">
<div class="t" style="left:2px;top:689px;font-size:12px;color:#c4e4fc;transform:scaleX(0.93);transform-origin:0 0">Ready</div>
<div class="t" style="left:958px;top:689px;font-size:12px;color:#c4e4fc">Ln 1</div>
</div>
<!-- CONTEXT MENU -->
<div id="ctx">
<div class="a" style="left:570px;top:500px;width:80px;height:80px;border-radius:50%;background:radial-gradient(circle,rgba(250,200,120,0.28) 0%,rgba(250,200,120,0.12) 50%,rgba(250,200,120,0) 70%)"></div>
<div class="a" style="left:610px;top:346px;width:221px;height:205px;background:rgba(0,0,0,0.18);filter:blur(2px)"></div>
<div class="a" style="left:608px;top:344px;width:220px;height:205px;background:#eef0f9;border:1px solid #c4c8d8"></div>
<svg class="a" style="left:618px;top:354px" width="12" height="8" viewBox="0 0 12 8"><path d="M4 0.5 L0.8 4 L4 7.5 M8 0.5 L11.2 4 L8 7.5" fill="none" stroke="#333" stroke-width="1.4"/></svg><div class="t" style="left:644px;top:351.5px;font-size:12px;color:#1e1e1e;transform:scaleX(0.93);transform-origin:0 0">View Code</div><div class="t" style="left:763px;top:351.5px;font-size:12px;color:#1e1e1e;transform:scaleX(0.93);transform-origin:0 0">F7</div>
<svg class="a" style="left:618px;top:373px" width="12" height="12" viewBox="0 0 12 12"><path d="M7.5 0.7 H0.7 V8 H4" fill="none" stroke="#555" stroke-width="1.2"/><path d="M7.5 0.7 V4" stroke="#555" stroke-width="1.2"/><circle cx="8" cy="8" r="3.3" fill="#2d2d30"/></svg><div class="t" style="left:644px;top:372.5px;font-size:12px;color:#1e1e1e;transform:scaleX(0.93);transform-origin:0 0">View Designer</div><div class="t" style="left:763px;top:372.5px;font-size:12px;color:#1e1e1e;transform:scaleX(0.93);transform-origin:0 0">Shift+F7</div>
<svg class="a" style="left:618px;top:396px" width="13" height="13" viewBox="0 0 13 13"><path d="M3 0 V6 M0 3 H6" stroke="#3a9a3a" stroke-width="1.5"/><path d="M3 7 V12 M8 4 H12 V12" fill="none" stroke="#333" stroke-width="1.6"/><path d="M5 12.5 H7 M9 12.5 H11" stroke="#555" stroke-width="1"/></svg><div class="t" style="left:644px;top:397px;font-size:12px;color:#1e1e1e;transform:scaleX(0.93);transform-origin:0 0">Insert Snippet...</div><div class="t" style="left:763px;top:397px;font-size:12px;color:#1e1e1e;transform:scaleX(0.93);transform-origin:0 0">Ctrl+K, X</div>
<svg class="a" style="left:618px;top:417px" width="13" height="13" viewBox="0 0 13 13"><path d="M3 0 V6 M0 3 H6" stroke="#3a9a3a" stroke-width="1.5"/><path d="M3 7 V12 M8 4 H12 V12" fill="none" stroke="#333" stroke-width="1.6"/><path d="M5 12.5 H7 M9 12.5 H11" stroke="#555" stroke-width="1"/></svg><div class="t" style="left:644px;top:418px;font-size:12px;color:#1e1e1e;transform:scaleX(0.93);transform-origin:0 0">Surround With...</div><div class="t" style="left:763px;top:418px;font-size:12px;color:#1e1e1e;transform:scaleX(0.93);transform-origin:0 0">Ctrl+K, S</div>
<svg class="a" style="left:617px;top:441px" width="13" height="13" viewBox="0 0 13 13"><path d="M0 3 H5 M3 0.5 L5.5 3 L3 5.5" fill="none" stroke="#1e5a96" stroke-width="1.5"/><rect x="6" y="6" width="6.5" height="6.5" fill="#2d2d30"/></svg><div class="t" style="left:644px;top:442px;font-size:12px;color:#1e1e1e;transform:scaleX(0.93);transform-origin:0 0">Go To Definition</div><div class="t" style="left:763px;top:442px;font-size:12px;color:#1e1e1e;transform:scaleX(0.93);transform-origin:0 0">F12</div>
<svg class="a" style="left:617px;top:464px" width="13" height="14" viewBox="0 0 13 14"><path d="M3 0 L9 9 M10 0 L4 9" stroke="#333" stroke-width="1.3"/><circle cx="3.5" cy="11" r="2.3" fill="none" stroke="#333" stroke-width="1.3"/><circle cx="9.5" cy="11" r="2.3" fill="none" stroke="#333" stroke-width="1.3"/></svg><div class="t" style="left:644px;top:465.5px;font-size:12px;color:#1e1e1e;transform:scaleX(0.93);transform-origin:0 0">Cut</div><div class="t" style="left:763px;top:465.5px;font-size:12px;color:#1e1e1e;transform:scaleX(0.93);transform-origin:0 0">Ctrl+X</div>
<svg class="a" style="left:618px;top:486px" width="12" height="13" viewBox="0 0 12 13"><path d="M4 3 V0.7 H11.3 V8.5 H8.5" fill="none" stroke="#333" stroke-width="1.2"/><rect x="0.7" y="4" width="7" height="8.3" fill="none" stroke="#333" stroke-width="1.3"/></svg><div class="t" style="left:644px;top:486.5px;font-size:12px;color:#1e1e1e;transform:scaleX(0.93);transform-origin:0 0">Copy</div><div class="t" style="left:763px;top:486.5px;font-size:12px;color:#1e1e1e;transform:scaleX(0.93);transform-origin:0 0">Ctrl+C</div>
<svg class="a" style="left:618px;top:506px" width="12" height="13" viewBox="0 0 12 13"><path d="M1 4 H11 V12 H1 Z M4 4 V1.5 H8 V4 M4 8 H9 V12" fill="none" stroke="#c4c6d0" stroke-width="1.2"/></svg><div class="t" style="left:644px;top:507.5px;font-size:12px;color:#a8abb6;transform:scaleX(0.93);transform-origin:0 0">Paste</div><div class="t" style="left:763px;top:507.5px;font-size:12px;color:#a8abb6;transform:scaleX(0.93);transform-origin:0 0">Ctrl+V</div>
<div class="t" style="left:644px;top:530.5px;font-size:12px;color:#1e1e1e;transform:scaleX(0.93);transform-origin:0 0">Outlining</div>
<div class="a" style="left:640px;top:390px;width:184px;height:1px;background:#cfd3e2"></div>
<div class="a" style="left:640px;top:434px;width:184px;height:1px;background:#cfd3e2"></div>
<div class="a" style="left:640px;top:458px;width:184px;height:1px;background:#cfd3e2"></div>
<div class="a" style="left:640px;top:524px;width:184px;height:1px;background:#cfd3e2"></div>
<svg class="a" style="left:812px;top:533px" width="4" height="8"><path d="M0 0 L4 4 L0 8 Z" fill="#1e1e1e"/></svg>
<!-- mouse cursor -->
<svg class="a" style="left:608px;top:554px" width="12" height="18" viewBox="0 0 12 18"><path d="M1 1 V15 L4.5 11.5 L7 17 L9 16 L6.5 10.5 H11 Z" fill="#fff" stroke="#222" stroke-width="1"/></svg>
</div>
<!-- WEBCAM -->
<div id="cam">
<svg class="a" style="left:978px;top:477px" width="300" height="227" viewBox="978 477 300 227">
<defs>
<linearGradient id="bg" x1="0" y1="0" x2="0" y2="1"><stop offset="0" stop-color="#c9c9cb"/><stop offset="1" stop-color="#b4b4b4"/></linearGradient>
<radialGradient id="face" cx="0.5" cy="0.5" r="0.6"><stop offset="0" stop-color="#b0826a"/><stop offset="1" stop-color="#8e624c"/></radialGradient>
<linearGradient id="shirt" x1="0" y1="0" x2="0" y2="1"><stop offset="0" stop-color="#2464c8"/><stop offset="1" stop-color="#1a4aa8"/></linearGradient>
</defs>
<rect x="978" y="477" width="300" height="227" fill="url(#bg)"/>
<!-- chair -->
<path d="M1073 568 Q1073 562 1081 562 H1228 Q1236 562 1236 570 L1236 704 H1070 Z" fill="#3b3c40"/>
<path d="M1075 589 H1235" stroke="#55565b" stroke-width="1.5"/>
<!-- hair silhouette -->
<path d="M1107 542 C1104 515 1108 494 1118 486 C1128 477 1160 475 1172 487 C1182 498 1184 522 1179 545 C1176 556 1172 564 1172 569 C1186 576 1200 588 1202 602 C1203 616 1196 624 1188 621 C1176 616 1166 604 1162 592 L1112 560 Z" fill="#1f1715"/>
<!-- neck -->
<path d="M1119 572 H1162 L1164 610 H1117 Z" fill="#9a6a52"/>
<!-- shirt -->
<path d="M1071 600 C1088 592 1106 588 1117 585 C1126 602 1150 610 1162 594 C1180 596 1204 598 1216 605 C1228 626 1238 652 1242 676 C1230 680 1218 682 1206 682 L1204 704 H1077 L1077 682 C1064 682 1050 679 1041 675 C1048 650 1058 620 1071 600 Z" fill="url(#shirt)"/>
<path d="M1116 587 C1126 606 1150 612 1163 596" stroke="#1a48a4" stroke-width="3" fill="none"/>
<path d="M1074 604 C1080 625 1086 640 1088 660 L1086 684 M1212 606 C1206 625 1202 645 1201 684" stroke="#143a90" stroke-width="3" fill="none" opacity="0.35"/>
<!-- ponytail over shirt -->
<path d="M1166 575 C1184 580 1200 590 1202 604 C1203 617 1196 624 1188 621 C1174 615 1166 602 1163 590 Z" fill="#1f1715"/>
<!-- arms -->
<path d="M1041 677 C1052 681 1064 683 1077 683 L1079 704 H1038 Z" fill="#c08a68"/>
<path d="M1206 683 C1218 683 1232 680 1243 677 L1246 704 H1204 Z" fill="#c08a68"/>
<!-- face -->
<path d="M1108 540 C1109 524 1123 510 1141 508 C1160 509 1175 520 1176 540 C1176 566 1163 600 1143 600 C1121 600 1108 566 1108 540 Z" fill="url(#face)"/>
<path d="M1107 532 C1111 518 1124 509 1141 508 C1130 513 1119 521 1111 534 Z" fill="#1f1715"/>
<!-- eyes / brows / mouth -->
<ellipse cx="1124" cy="543" rx="5" ry="2.3" fill="#2a1a14"/>
<ellipse cx="1158" cy="544" rx="5" ry="2.3" fill="#2a1a14"/>
<path d="M1115 534 Q1124 530 1133 534 M1150 535 Q1159 531 1167 536" stroke="#3a2418" stroke-width="2" fill="none"/>
<path d="M1136 566 Q1141 569 1146 566" stroke="#6a4030" stroke-width="1.5" fill="none"/>
<ellipse cx="1141" cy="578" rx="9" ry="4.5" fill="#7a4a3e"/>
<path d="M1135 577 H1148" stroke="#cdbab0" stroke-width="2"/>
<text x="1088" y="684" font-family="Liberation Serif" font-weight="bold" font-size="30" fill="#e4ecf8" stroke="#e4ecf8" stroke-width="0.8" textLength="112" lengthAdjust="spacingAndGlyphs">IntelliRise</text>
</svg>
</div>
</body></html>
